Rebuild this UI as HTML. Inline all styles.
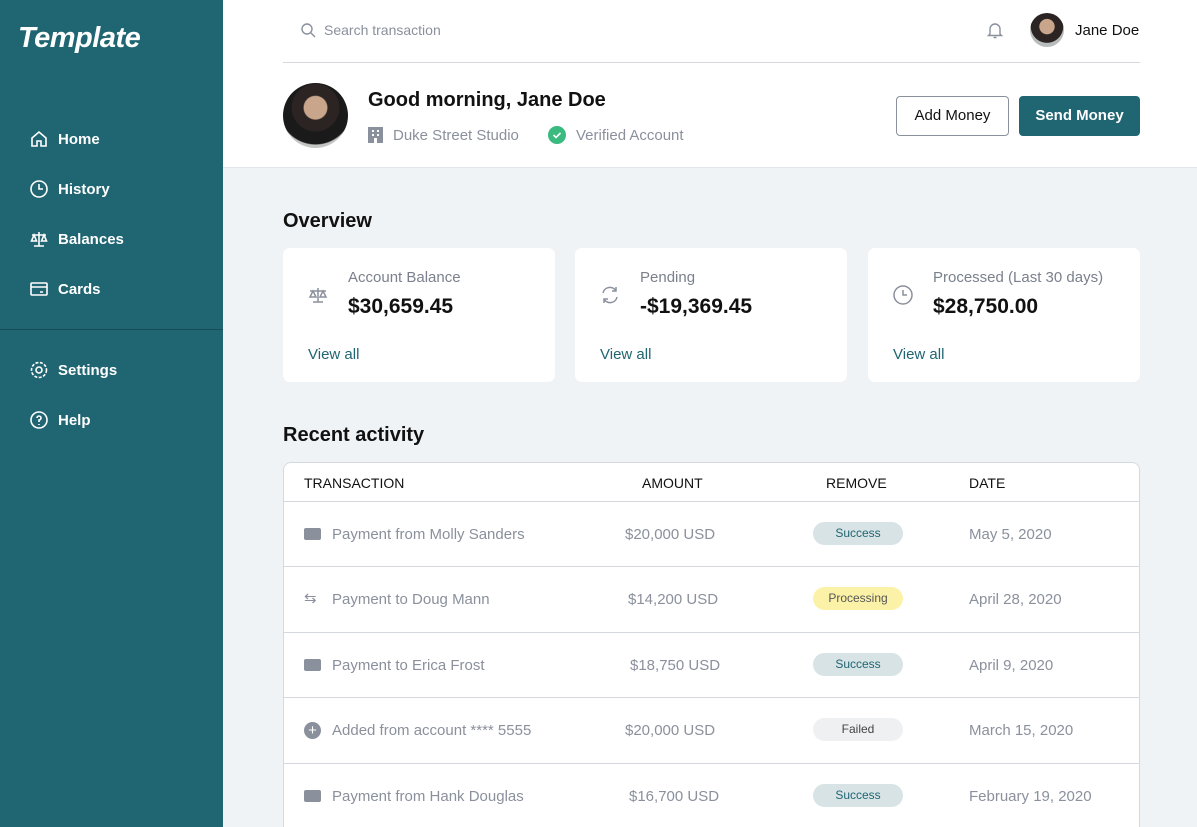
<!DOCTYPE html>
<html style="width:1197px;height:827px;overflow:hidden"><head><meta charset="utf-8"><style>
*{box-sizing:border-box;margin:0;padding:0}
body{width:1197px;height:827px;overflow:hidden;font-family:"Liberation Sans",sans-serif;background:#f0f3f6;position:relative;color:#111}
.side{position:absolute;left:0;top:0;width:223px;height:827px;background:#206572;color:#fff}
.logo{position:absolute;left:18px;top:22px;font-size:29px;font-weight:bold;font-style:italic;letter-spacing:-.5px}
.nav{position:absolute;left:29px;display:flex;align-items:center;font-size:15px;font-weight:bold}
.nav svg{width:20px;height:20px;margin-right:9px;fill:none;stroke:#fff;stroke-width:1.6}
.sep{position:absolute;left:0;top:329px;width:223px;height:1px;background:#164d57}
.top{position:absolute;left:223px;top:0;width:974px;height:168px;background:#fff;border-bottom:1px solid #e2e6ea}
.abs{position:absolute}
.gray{color:#8a909c}
.card{position:absolute;top:248px;width:272px;height:134px;background:#fff;border-radius:7px}
.card .lbl{position:absolute;left:65px;top:21px;font-size:15px;color:#7a808c}
.card .val{position:absolute;left:65px;top:47px;font-size:21px;font-weight:bold}
.card .va{position:absolute;left:25px;top:98px;font-size:15px;color:#206572}
.card svg{position:absolute;left:24px;top:36px;width:22px;height:22px;fill:none;stroke:#8a909c;stroke-width:1.5}
.tbl{position:absolute;left:283px;top:462px;width:857px;height:365px;background:#fff;border:1px solid #d5d9de;border-bottom:none;border-radius:8px 8px 0 0;overflow:hidden}
.th{position:absolute;top:12px;font-size:14px;color:#111}
.row{position:absolute;left:0;width:855px;height:65px;border-top:1px solid #d5d9de;font-size:15px;color:#8a909c}
.row div{position:absolute;top:24px}
.badge{top:20px!important;left:529px;width:90px;height:23px;border-radius:12px;font-size:12px;text-align:center;line-height:23px}
.s{background:#d7e3e5;color:#206572}.p{background:#fbf2a8;color:#555}.f{background:#eef0f2;color:#444}
</style></head><body>
<div class="side">
<div class="logo">Template</div>
<div class="nav" style="top:129px"><svg viewBox="0 0 20 20"><path d="M3 9l7-6 7 6v8h-5v-5h-4v5H3z"/></svg>Home</div>
<div class="nav" style="top:179px"><svg viewBox="0 0 20 20"><circle cx="10" cy="10" r="8"/><path d="M10 5v5h4"/></svg>History</div>
<div class="nav" style="top:229px"><svg viewBox="0 0 20 20"><path d="M10 3v14M5 17h10M3 6h14M5 6l-2.5 6h5zM15 6l-2.5 6h5z"/></svg>Balances</div>
<div class="nav" style="top:279px"><svg viewBox="0 0 20 20"><rect x="2" y="4" width="16" height="12" rx="1"/><path d="M2 8h16M11 13h3"/></svg>Cards</div>
<div class="sep"></div>
<div class="nav" style="top:360px"><svg viewBox="0 0 20 20"><circle cx="10" cy="10" r="3"/><circle cx="10" cy="10" r="7.5" stroke-dasharray="3 1.5"/></svg>Settings</div>
<div class="nav" style="top:410px"><svg viewBox="0 0 20 20"><circle cx="10" cy="10" r="8"/><path d="M8 8a2 2 0 1 1 2 2v2M10 14v1"/></svg>Help</div>
</div>
<div class="top">
<svg class="abs" style="left:77px;top:22px" width="16" height="16" viewBox="0 0 16 16" fill="none" stroke="#8a909c" stroke-width="1.4"><circle cx="7" cy="7" r="5"/><path d="M11 11l4 4"/></svg>
<div class="abs gray" style="left:101px;top:22px;font-size:14px">Search transaction</div>
<svg class="abs" style="left:762px;top:20px" width="20" height="20" viewBox="0 0 20 20" fill="none" stroke="#8a909c" stroke-width="1.4"><path d="M5 14V9a5 5 0 0 1 10 0v5l1.5 1.5h-13zM8.5 17.5h3"/></svg>
<div class="abs" style="left:807px;top:13px;width:34px;height:34px;border-radius:50%;background:radial-gradient(circle at 50% 40%,#c9a58c 0 28%,#2b2422 30% 60%,#b9bcbd 62%)"></div>
<div class="abs" style="left:852px;top:22px;font-size:15px">Jane Doe</div>
<div class="abs" style="left:60px;top:62px;width:857px;height:1px;background:#d5d9de"></div>
<div class="abs" style="left:60px;top:83px;width:65px;height:65px;border-radius:50%;background:radial-gradient(circle at 50% 38%,#c9a58c 0 22%,#2b2422 24% 45%,#1a1a1a 47% 70%,#c4c6c4 72%)"></div>
<div class="abs" style="left:145px;top:89px;font-size:20px;font-weight:bold">Good morning, Jane Doe</div>
<svg class="abs" style="left:145px;top:127px" width="15" height="16" viewBox="0 0 15 16"><rect width="15" height="16" fill="#8a909c"/><rect x="4" y="3" width="2" height="2" fill="#fff"/><rect x="9" y="3" width="2" height="2" fill="#fff"/><rect x="4" y="7" width="2" height="2" fill="#fff"/><rect x="9" y="7" width="2" height="2" fill="#fff"/><rect x="6" y="11" width="3" height="5" fill="#fff"/></svg>
<div class="abs gray" style="left:170px;top:127px;font-size:15px">Duke Street Studio</div>
<svg class="abs" style="left:325px;top:126px" width="18" height="18" viewBox="0 0 18 18"><circle cx="9" cy="9" r="9" fill="#3bba7f"/><path d="M5.5 9l2.5 2.5 4.5-4.5" stroke="#fff" stroke-width="1.6" fill="none"/></svg>
<div class="abs gray" style="left:353px;top:127px;font-size:15px">Verified Account</div>
<div class="abs" style="left:673px;top:96px;width:113px;height:40px;border:1px solid #8a909c;border-radius:4px;font-size:15px;text-align:center;line-height:38px">Add Money</div>
<div class="abs" style="left:796px;top:96px;width:121px;height:40px;background:#206572;border-radius:4px;font-size:15px;color:#fff;font-weight:bold;text-align:center;line-height:40px">Send Money</div>
</div>
<div class="abs" style="left:283px;top:210px;font-size:20px;font-weight:bold">Overview</div>
<div class="card" style="left:283px"><svg viewBox="0 0 22 22"><path d="M11 4v14M6 18h10M3 7h16M6 7l-3 6h6zM16 7l-3 6h6z"/></svg><div class="lbl">Account Balance</div><div class="val">$30,659.45</div><div class="va">View all</div></div>
<div class="card" style="left:575px"><svg viewBox="0 0 22 22"><path d="M4 9a7 7 0 0 1 13-2M18 13a7 7 0 0 1-13 2M17 3v4h-4M5 19v-4h4"/></svg><div class="lbl">Pending</div><div class="val">-$19,369.45</div><div class="va">View all</div></div>
<div class="card" style="left:868px"><svg viewBox="0 0 22 22"><circle cx="11" cy="11" r="9"/><path d="M11 6v5h4"/></svg><div class="lbl">Processed (Last 30 days)</div><div class="val">$28,750.00</div><div class="va">View all</div></div>
<div class="abs" style="left:283px;top:424px;font-size:20px;font-weight:bold">Recent activity</div>
<div class="tbl">
<div class="th" style="left:20px">TRANSACTION</div><div class="th" style="left:358px">AMOUNT</div><div class="th" style="left:542px">REMOVE</div><div class="th" style="left:685px">DATE</div>
<div class="row" style="top:38px"><div style="left:20px;top:26px;width:17px;height:12px;background:#8a909c;border-radius:2px"></div><div style="left:48px">Payment from Molly Sanders</div><div style="left:341px">$20,000 USD</div><div class="badge s">Success</div><div style="left:685px">May 5, 2020</div></div>
<div class="row" style="top:103px"><div style="left:20px;top:22px;color:#8a909c">⇆</div><div style="left:48px">Payment to Doug Mann</div><div style="left:344px">$14,200 USD</div><div class="badge p">Processing</div><div style="left:685px">April 28, 2020</div></div>
<div class="row" style="top:169px"><div style="left:20px;top:26px;width:17px;height:12px;background:#8a909c;border-radius:2px"></div><div style="left:48px">Payment to Erica Frost</div><div style="left:346px">$18,750 USD</div><div class="badge s">Success</div><div style="left:685px">April 9, 2020</div></div>
<div class="row" style="top:234px"><div style="left:20px;top:24px;width:17px;height:17px;background:#8a909c;border-radius:50%;color:#fff;font-size:15px;line-height:17px;text-align:center">+</div><div style="left:48px">Added from account **** 5555</div><div style="left:341px">$20,000 USD</div><div class="badge f">Failed</div><div style="left:685px">March 15, 2020</div></div>
<div class="row" style="top:300px"><div style="left:20px;top:26px;width:17px;height:12px;background:#8a909c;border-radius:2px"></div><div style="left:48px">Payment from Hank Douglas</div><div style="left:345px">$16,700 USD</div><div class="badge s">Success</div><div style="left:685px">February 19, 2020</div></div>
</div>
</body></html>
